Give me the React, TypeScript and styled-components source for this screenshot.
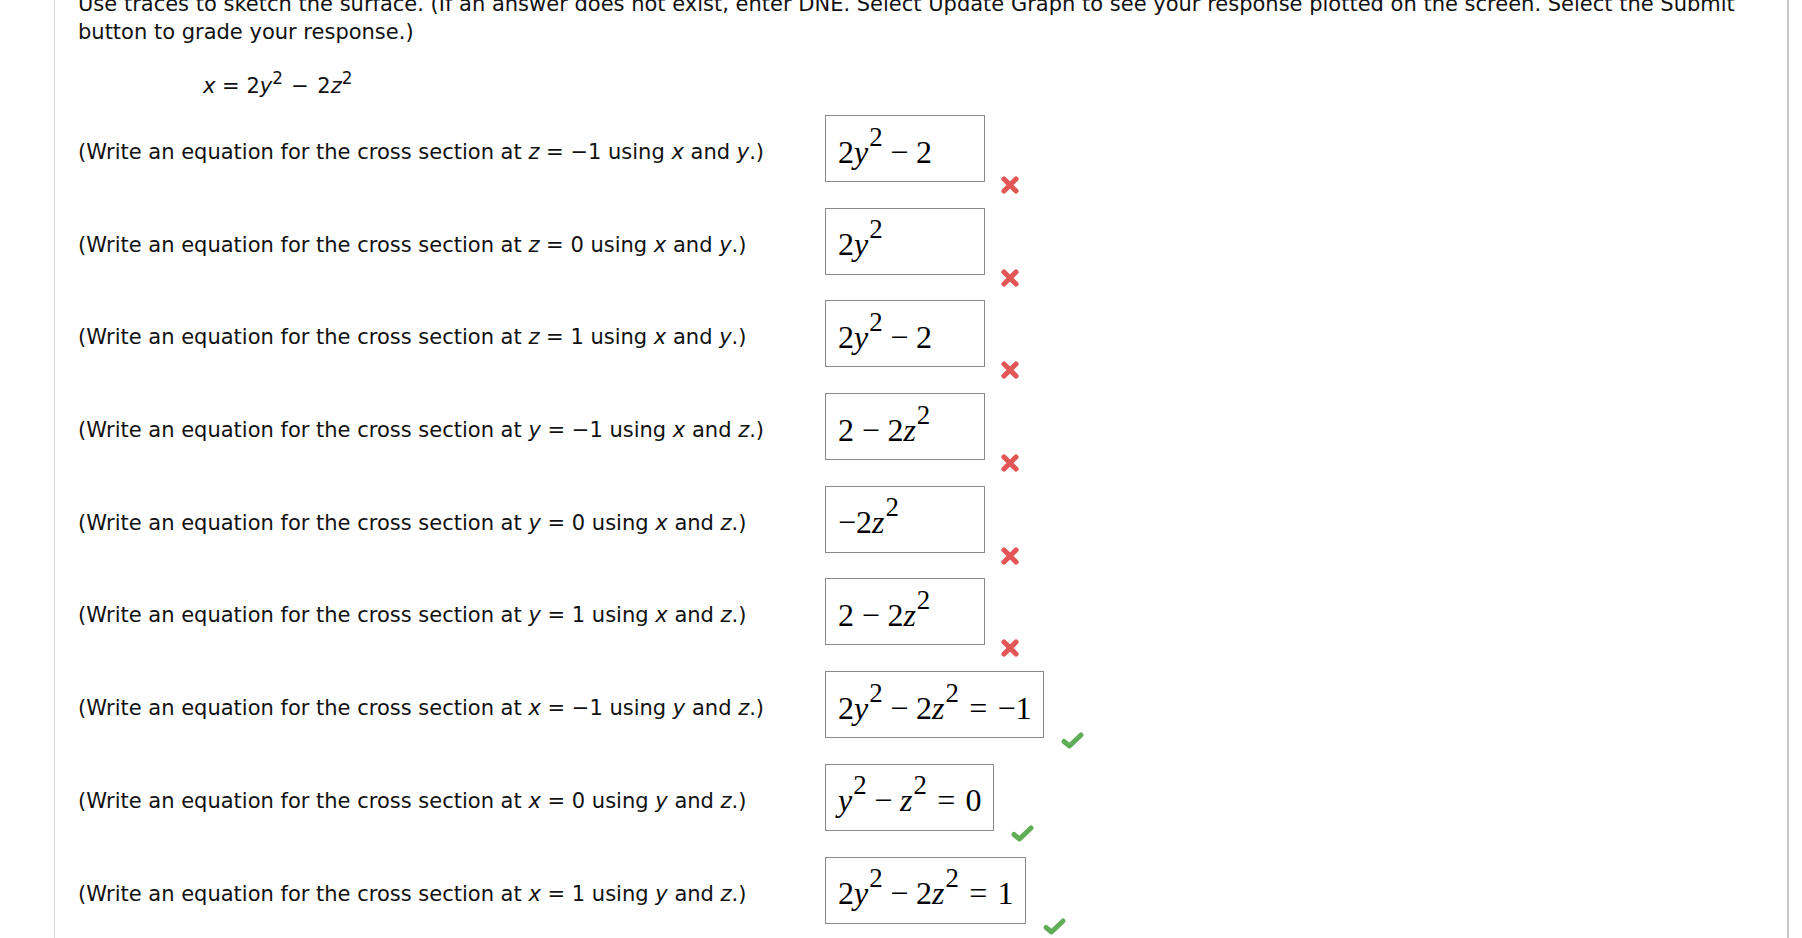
import React from 'react';
import styled, { createGlobalStyle } from 'styled-components';

const GlobalStyle = createGlobalStyle`
  html, body {
    margin: 0;
    padding: 0;
    background: #ffffff;
    overflow: hidden;
  }
`;

type Row = {
  axis: string;
  value: string;
  vars: [string, string];
  answer: React.ReactNode;
  correct: boolean;
};

const Page = styled.div`
  display: flex;
  height: 938px;
  padding-left: 54px;
  font-family: 'DejaVu Sans', Verdana, sans-serif;
  color: #111;
`;

const Panel = styled.div`
  width: 1735px;
  box-sizing: border-box;
  border-left: 1px solid #d6d6d6;
  border-right: 2px solid #c6c6c6;
  padding-left: 23px;
  overflow: hidden;
`;

const Intro = styled.p`
  margin: -10px 0 0;
  width: 1660px;
  font-size: 21px;
  line-height: 28px;
`;

const Given = styled.div`
  margin: 26px 0 0 125px;
  font-size: 21px;
  line-height: 28px;
`;

const TextSup = styled.span`
  font-size: 0.8em;
  position: relative;
  top: -0.55em;
  line-height: 0;
`;

const TextOp = styled.span`
  margin: 0 0.4em;
`;

const Rows = styled.div`
  display: flex;
  flex-direction: column;
  gap: 25.7px;
  margin-top: 15px;
`;

const RowLine = styled.div`
  display: flex;
  align-items: flex-start;
  height: 67px;
`;

const Prompt = styled.div`
  width: 747px;
  flex: none;
  font-size: 21px;
  line-height: 28px;
  padding-top: 23px;
  white-space: nowrap;
`;

const AnswerBox = styled.div`
  display: inline-flex;
  align-items: center;
  box-sizing: border-box;
  min-width: 160px;
  height: 67px;
  padding: 6px 12px 0;
  border: 1px solid #8a8a8a;
  background: #fff;
  font-family: 'Liberation Serif', 'Times New Roman', serif;
  font-size: 32px;
  line-height: 36px;
  white-space: nowrap;
  color: #000;
`;

const Mark = styled.span<{ $ok: boolean }>`
  display: inline-flex;
  align-self: flex-end;
  margin-left: ${({ $ok }) => ($ok ? '16px' : '14px')};
  margin-bottom: ${({ $ok }) => ($ok ? '-13px' : '-14px')};
`;

const V = styled.i`
  font-style: italic;
`;

const MSup = styled.span`
  font-size: 0.84em;
  position: relative;
  top: -15px;
  line-height: 0;
  margin-left: 1px;
`;

const Bin = styled.span`
  margin: 0 0.24em;
`;

const Rel = styled.span`
  margin: 0 0.32em;
`;

const CrossIcon = () => (
  <svg width="22" height="22" viewBox="0 0 22 22">
    <path d="M5 5 L17 17 M17 5 L5 17" stroke="#e35656" strokeWidth="5.2" strokeLinecap="round" />
  </svg>
);

const CheckIcon = () => (
  <svg width="25" height="21" viewBox="0 0 25 21">
    <path
      d="M4 11.5 L9.5 16 L21 5"
      fill="none"
      stroke="#60ad58"
      strokeWidth="5"
      strokeLinecap="round"
      strokeLinejoin="round"
    />
  </svg>
);

const sq = <MSup>2</MSup>;

const rows: Row[] = [
  { axis: 'z', value: '−1', vars: ['x', 'y'], correct: false, answer: <>2<V>y</V>{sq}<Bin>−</Bin>2</> },
  { axis: 'z', value: '0', vars: ['x', 'y'], correct: false, answer: <>2<V>y</V>{sq}</> },
  { axis: 'z', value: '1', vars: ['x', 'y'], correct: false, answer: <>2<V>y</V>{sq}<Bin>−</Bin>2</> },
  { axis: 'y', value: '−1', vars: ['x', 'z'], correct: false, answer: <>2<Bin>−</Bin>2<V>z</V>{sq}</> },
  { axis: 'y', value: '0', vars: ['x', 'z'], correct: false, answer: <>−2<V>z</V>{sq}</> },
  { axis: 'y', value: '1', vars: ['x', 'z'], correct: false, answer: <>2<Bin>−</Bin>2<V>z</V>{sq}</> },
  {
    axis: 'x',
    value: '−1',
    vars: ['y', 'z'],
    correct: true,
    answer: <>2<V>y</V>{sq}<Bin>−</Bin>2<V>z</V>{sq}<Rel>=</Rel>−1</>,
  },
  {
    axis: 'x',
    value: '0',
    vars: ['y', 'z'],
    correct: true,
    answer: <><V>y</V>{sq}<Bin>−</Bin><V>z</V>{sq}<Rel>=</Rel>0</>,
  },
  {
    axis: 'x',
    value: '1',
    vars: ['y', 'z'],
    correct: true,
    answer: <>2<V>y</V>{sq}<Bin>−</Bin>2<V>z</V>{sq}<Rel>=</Rel>1</>,
  },
];

const App = () => (
  <>
    <GlobalStyle />
    <Page>
      <Panel>
        <Intro>
          Use traces to sketch the surface. (If an answer does not exist, enter DNE. Select Update Graph to see your
          response plotted on the screen. Select the Submit button to grade your response.)
        </Intro>
        <Given>
          <V>x</V> = 2<V>y</V>
          <TextSup>2</TextSup>
          <TextOp>−</TextOp>2<V>z</V>
          <TextSup>2</TextSup>
        </Given>
        <Rows>
          {rows.map((row, i) => (
            <RowLine key={i}>
              <Prompt>
                (Write an equation for the cross section at <V>{row.axis}</V> = {row.value} using{' '}
                <V>{row.vars[0]}</V> and <V>{row.vars[1]}</V>.)
              </Prompt>
              <AnswerBox>{row.answer}</AnswerBox>
              <Mark $ok={row.correct}>{row.correct ? <CheckIcon /> : <CrossIcon />}</Mark>
            </RowLine>
          ))}
        </Rows>
      </Panel>
    </Page>
  </>
);

export default App;
